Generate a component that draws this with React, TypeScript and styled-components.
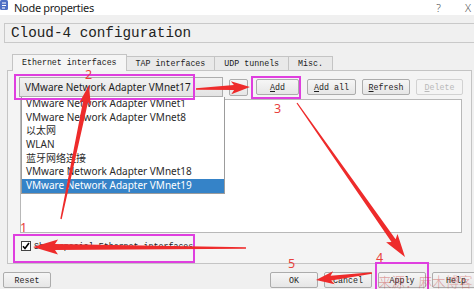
import React from 'react';
import styled, { createGlobalStyle } from 'styled-components';

const mono = `"Liberation Mono", "DejaVu Sans Mono", monospace`;
const sans = `"Noto Sans", "Noto Sans CJK SC", sans-serif`;

const GlobalStyle = createGlobalStyle`
  html, body {
    margin: 0;
    padding: 0;
    background: #f0f0f0;
  }
  body {
    width: 474px;
    height: 289px;
    overflow: hidden;
  }
`;

const Window = styled.div`
  position: relative;
  width: 474px;
  height: 289px;
  overflow: hidden;
  background: #f0f0f0;
  display: flex;
  flex-direction: column;
`;

const TitleBar = styled.div`
  flex-shrink: 0;
  height: 15px;
  background: #fff;
  display: flex;
  align-items: flex-end;
  font-family: ${sans};
  font-size: 11px;
  line-height: 14px;
  color: #1a1a1a;
`;

const TitleIcon = styled.svg`
  width: 9px;
  height: 11px;
  align-self: flex-start;
  margin: 0 5px 0 0;
`;

const TitleText = styled.span`
  letter-spacing: -0.3px;
`;

const TitleControls = styled.div`
  margin-left: auto;
  display: flex;
  gap: 24px;
  padding-right: 3px;
  color: #555;
  font-size: 11px;
  font-weight: 300;
`;

const Heading = styled.div`
  margin: 8px 0 0 4px;
  height: 20px;
  box-sizing: border-box;
  border: 1px solid #c9c9c9;
  border-right: none;
  padding-left: 6px;
  font-family: ${mono};
  font-size: 14.3px;
  line-height: 18px;
  color: #222;
`;

const TabArea = styled.div`
  margin: 11px 2px 0 7px;
  display: flex;
  flex-direction: column;
`;

const TabBar = styled.div`
  display: flex;
  align-items: flex-end;
  height: 16px;
  padding-left: 6px;
`;

const Tab = styled.div<{ $active?: boolean }>`
  position: relative;
  z-index: ${(p) => (p.$active ? 2 : 1)};
  box-sizing: border-box;
  height: ${(p) => (p.$active ? 17 : 14)}px;
  margin-bottom: ${(p) => (p.$active ? -1 : 0)}px;
  margin-left: -1px;
  padding: 0 9px;
  border: 1px solid #c4c4c4;
  border-bottom: none;
  background: ${(p) => (p.$active ? '#f5f5f5' : '#e9e9e9')};
  font-family: ${mono};
  font-size: 8.3px;
  line-height: ${(p) => (p.$active ? 15 : 13)}px;
  color: #1a1a1a;
  white-space: nowrap;
`;

const Panel = styled.div`
  box-sizing: border-box;
  height: 194px;
  border: 1px solid #c4c4c4;
  background: #f4f4f4;
  padding: 6px 0 0 11px;
  display: flex;
  flex-direction: column;
`;

const ControlRow = styled.div`
  display: flex;
  align-items: center;
  height: 20px;
`;

const Combo = styled.div`
  position: relative;
  box-sizing: border-box;
  width: 204px;
  height: 20px;
  border: 1px solid #adadad;
  background: linear-gradient(#f2f2f2, #e3e3e3);
  padding-left: 5px;
  font-family: ${sans};
  font-size: 10px;
  line-height: 18px;
  color: #1e1e1e;
  white-space: nowrap;
`;

const Popup = styled.div`
  position: absolute;
  z-index: 5;
  top: 19px;
  left: 1px;
  box-sizing: border-box;
  width: 204px;
  border: 1px solid #9c9c9c;
  border-top: none;
  background: #fff;
`;

const PopupItem = styled.div<{ $selected?: boolean }>`
  height: 13.7px;
  padding-left: 4px;
  font-family: ${sans};
  font-size: 10px;
  line-height: 13.7px;
  white-space: nowrap;
  background: ${(p) => (p.$selected ? '#3583c8' : 'transparent')};
  color: ${(p) => (p.$selected ? '#fff' : '#2a2a2a')};
`;

const Button = styled.div<{ $w: number; $gap?: number; $disabled?: boolean }>`
  box-sizing: border-box;
  width: ${(p) => p.$w}px;
  height: ${(p) => (p.$w < 30 ? 17 : 16)}px;
  margin-left: ${(p) => p.$gap ?? 0}px;
  border: 1px solid ${(p) => (p.$disabled ? '#d2d2d2' : '#acacac')};
  border-radius: 2px;
  background: ${(p) => (p.$disabled ? '#f4f4f4' : 'linear-gradient(#f6f6f6, #e6e6e6)')};
  display: flex;
  align-items: center;
  justify-content: center;
  font-family: ${mono};
  font-size: 8.3px;
  color: ${(p) => (p.$disabled ? '#b9b9b9' : '#1e1e1e')};
  white-space: nowrap;
  flex-shrink: 0;
`;

const ListBox = styled.div`
  box-sizing: border-box;
  margin: 2px 0 0 1px;
  width: 442px;
  height: 134px;
  border: 1px solid #b8b8b8;
  background: #fff;
`;

const CheckRow = styled.div`
  display: flex;
  align-items: center;
  gap: 3px;
  margin: 8px 0 0 2px;
  height: 10px;
  font-family: ${mono};
  font-size: 8.3px;
  color: #222;
`;

const CheckBox = styled.div`
  box-sizing: border-box;
  width: 10px;
  height: 10px;
  border: 1px solid #444;
  background: #fff;
  display: flex;
  align-items: center;
  justify-content: center;
`;

const Footer = styled.div`
  margin-top: 8px;
  height: 16px;
  display: flex;
  padding-left: 3px;
`;

const FooterRight = styled.div`
  margin-left: auto;
  margin-right: -6px;
  display: flex;
  gap: 6px;
`;

const Overlay = styled.svg`
  position: absolute;
  inset: 0;
  z-index: 10;
  pointer-events: none;
`;

const StepNo = styled.span<{ $x: number; $y: number }>`
  position: absolute;
  z-index: 11;
  left: ${(p) => p.$x}px;
  top: ${(p) => p.$y}px;
  font-family: ${sans};
  font-size: 12.5px;
  line-height: 12px;
  color: #e8413c;
`;

const Watermark = styled.span`
  position: absolute;
  z-index: 12;
  left: 378px;
  top: 274px;
  font-family: "Noto Sans CJK SC", sans-serif;
  font-size: 13.5px;
  font-weight: 300;
  line-height: 15px;
  color: rgba(200, 50, 50, 0.45);
  white-space: nowrap;
`;

type Pt = [number, number];

const arrowPoints = (from: Pt, to: Pt, tail: number, shaft: number, head: number, headLen: number) => {
  const dx = to[0] - from[0];
  const dy = to[1] - from[1];
  const len = Math.hypot(dx, dy);
  const ux = dx / len;
  const uy = dy / len;
  const nx = -uy;
  const ny = ux;
  const bx = to[0] - ux * headLen;
  const by = to[1] - uy * headLen;
  const wx = to[0] - ux * (headLen + 3);
  const wy = to[1] - uy * (headLen + 3);
  const p = (x: number, y: number) => `${x.toFixed(1)},${y.toFixed(1)}`;
  return [
    p(from[0] + (nx * tail) / 2, from[1] + (ny * tail) / 2),
    p(bx + (nx * shaft) / 2, by + (ny * shaft) / 2),
    p(wx + (nx * head) / 2, wy + (ny * head) / 2),
    p(to[0], to[1]),
    p(wx - (nx * head) / 2, wy - (ny * head) / 2),
    p(bx - (nx * shaft) / 2, by - (ny * shaft) / 2),
    p(from[0] - (nx * tail) / 2, from[1] - (ny * tail) / 2),
  ].join(' ');
};

const arrows: [Pt, Pt, number, number, number, number][] = [
  [[246, 248], [33, 247], 1.5, 6, 15, 22],
  [[61, 219], [89, 85], 1.5, 5, 12, 17],
  [[196, 89], [250, 87], 1.5, 5, 13, 16],
  [[297, 103], [405, 257], 1.2, 5, 14, 20],
  [[372, 273], [316, 280], 1.5, 5, 13, 15],
];

const boxes = [
  { x: 15, y: 75, w: 179, h: 24 },
  { x: 252, y: 77, w: 48, h: 21 },
  { x: 14, y: 235, w: 180, h: 27 },
  { x: 376, y: 263, w: 52, h: 30 },
];

const adapters = [
  'VMware Network Adapter VMnet1',
  'VMware Network Adapter VMnet8',
  '以太网',
  'WLAN',
  '蓝牙网络连接',
  'VMware Network Adapter VMnet18',
  'VMware Network Adapter VMnet19',
];

export default function App() {
  return (
    <Window>
      <GlobalStyle />
      <TitleBar>
        <TitleIcon viewBox="0 0 9 11">
          <rect x="0" y="0" width="8" height="10" rx="1.5" fill="#4f6fc4" />
          <path d="M2 3 L6 3 M2 5.5 L6 5.5 M2 8 L5 8" stroke="#fff" strokeWidth="1.2" />
        </TitleIcon>
        <TitleText>Node properties</TitleText>
        <TitleControls>
          <span>?</span>
          <span>X</span>
        </TitleControls>
      </TitleBar>

      <Heading>Cloud-4 configuration</Heading>

      <TabArea>
        <TabBar>
          <Tab $active>Ethernet interfaces</Tab>
          <Tab>TAP interfaces</Tab>
          <Tab>UDP tunnels</Tab>
          <Tab>Misc.</Tab>
        </TabBar>
        <Panel>
          <ControlRow>
            <Combo>
              VMware Network Adapter VMnet17
              <Popup>
                {adapters.map((a, i) => (
                  <PopupItem key={a} $selected={i === adapters.length - 1}>
                    {a}
                  </PopupItem>
                ))}
              </Popup>
            </Combo>
            <Button $w={19} $gap={6} />
            <Button $w={43} $gap={8}>
              <u>A</u>dd
            </Button>
            <Button $w={49} $gap={8}>
              <u>A</u>dd all
            </Button>
            <Button $w={48} $gap={6}>
              <u>R</u>efresh
            </Button>
            <Button $w={47} $gap={6} $disabled>
              <u>D</u>elete
            </Button>
          </ControlRow>
          <ListBox />
          <CheckRow>
            <CheckBox>
              <svg width="8" height="8" viewBox="0 0 8 8">
                <path d="M1 4.2 L3 6.5 L7 1" stroke="#000" strokeWidth="1.6" fill="none" />
              </svg>
            </CheckBox>
            Show special Ethernet interfaces
          </CheckRow>
        </Panel>
      </TabArea>

      <Footer>
        <Button $w={48}>Reset</Button>
        <FooterRight>
          <Button $w={48}>OK</Button>
          <Button $w={48}>Cancel</Button>
          <Button $w={48}>Apply</Button>
          <Button $w={48}>Help</Button>
        </FooterRight>
      </Footer>

      <Overlay width="474" height="289" viewBox="0 0 474 289">
        {boxes.map((b, i) => (
          <rect key={i} x={b.x} y={b.y} width={b.w} height={b.h} fill="none" stroke="#df3fdf" strokeWidth="2" />
        ))}
        {arrows.map(([f, t, tl, sh, hd, hl], i) => (
          <polygon key={i} points={arrowPoints(f, t, tl, sh, hd, hl)} fill="#ee2b2b" />
        ))}
      </Overlay>
      <StepNo $x={20} $y={222}>1</StepNo>
      <StepNo $x={85} $y={69}>2</StepNo>
      <StepNo $x={274} $y={103}>3</StepNo>
      <StepNo $x={376} $y={252}>4</StepNo>
      <StepNo $x={288} $y={258}>5</StepNo>
      <Watermark>来源：麻木博客</Watermark>
    </Window>
  );
}
